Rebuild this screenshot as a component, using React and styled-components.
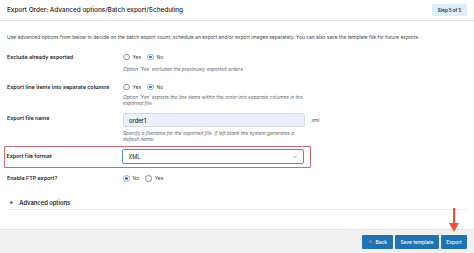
import React from 'react'
import styled, {createGlobalStyle} from 'styled-components'
import {ChevronLeft, ChevronDown} from 'lucide-react'

const GlobalStyle = createGlobalStyle`
    html, body {
        margin: 0;
        padding: 0;
        background: #fff;
    }
    body {
        font-family: Inter, "Liberation Sans", sans-serif;
        -webkit-font-smoothing: antialiased;
    }
`

const Page = styled.div`
    position: relative;
    width: 474px;
    height: 253px;
    overflow: hidden;
    display: flex;
    flex-direction: column;
    background: #fff;
    color: #1d2327;
`

const Header = styled.div`
    height: 21px;
    box-sizing: border-box;
    padding: 0 7px;
    display: flex;
    align-items: center;
    justify-content: space-between;
    border-bottom: 1px solid #e6e6e8;
`

const Title = styled.h2`
    margin: 0;
    font-size: 6.4px;
    font-weight: 500;
    color: #1d2327;
`

const StepBadge = styled.span`
    width: 35px;
    height: 12px;
    display: flex;
    align-items: center;
    justify-content: center;
    background: #dceef9;
    border-radius: 1px;
    font-size: 4.5px;
    font-weight: 700;
    color: #2c3e50;
`

const Body = styled.div`
    padding: 0 7px;
    display: flex;
    flex-direction: column;
`

const Intro = styled.p`
    margin: 12px 0 0;
    font-size: 4.9px;
    line-height: 8px;
    color: #3c434a;
    white-space: nowrap;
`

const Row = styled.div`
    display: grid;
    grid-template-columns: 116px 182px;
    margin-top: ${p => p.$gap}px;
    ${p => p.$highlight && `
        margin-left: -3px;
        width: 307px;
        box-sizing: border-box;
        border: 1.6px solid #c96b70;
        border-radius: 1px;
        padding: 2.4px 0 2.4px 1.4px;
    `}
`

const Label = styled.div`
    font-size: 5.4px;
    font-weight: 600;
    line-height: 8px;
    padding-top: ${p => p.$offset || 0}px;
    color: #1d2327;
    white-space: nowrap;
`

const Field = styled.div`
    display: flex;
    flex-direction: column;
`

const Help = styled.p`
    margin: ${p => p.$top}px 0 0;
    font-size: 4.8px;
    font-style: italic;
    line-height: 6px;
    color: #646970;
    white-space: nowrap;
`

const RadioRow = styled.div`
    display: flex;
    align-items: center;
    height: 8px;
    gap: 6px;
`

const RadioOption = styled.label`
    display: flex;
    align-items: center;
    gap: 3px;
    font-size: 5px;
    color: #3c434a;
`

const RadioDot = styled.span`
    width: 6.5px;
    height: 6.5px;
    box-sizing: border-box;
    border-radius: 50%;
    border: 0.8px solid ${p => p.$checked ? '#8fb4d8' : '#8c8f94'};
    background: #fff;
    display: flex;
    align-items: center;
    justify-content: center;
    &::after {
        content: '';
        width: 2.8px;
        height: 2.8px;
        border-radius: 50%;
        background: ${p => p.$checked ? '#2271b1' : 'transparent'};
    }
`

const InputLine = styled.div`
    display: flex;
    align-items: center;
    gap: 5px;
`

const TextInput = styled.div`
    width: 182px;
    height: 14px;
    box-sizing: border-box;
    flex-shrink: 0;
    background: #e8f0fe;
    border: 0.6px solid #d5dbe3;
    border-radius: 2px;
    padding-left: 5px;
    display: flex;
    align-items: center;
    font-size: 5.8px;
    font-weight: 500;
    color: #1d2327;
`

const Suffix = styled.span`
    font-size: 4.8px;
    color: #50575e;
`

const Select = styled.div`
    width: 182px;
    height: 15px;
    box-sizing: border-box;
    border: 1px solid #4a8fc7;
    border-radius: 2px;
    padding: 0 5px;
    display: flex;
    align-items: center;
    justify-content: space-between;
    font-size: 5.6px;
    color: #1d2327;
`

const Advanced = styled.div`
    margin-top: 16px;
    height: 9px;
    padding-bottom: 1.5px;
    border-bottom: 1px solid #ececec;
    display: flex;
    align-items: center;
    gap: 6px;
    padding-left: 3px;
    font-size: 5.8px;
    font-weight: 600;
    color: #1d2327;
`

const Caret = styled.span`
    font-size: 3.5px;
    color: #3c434a;
`

const Footer = styled.div`
    margin-top: auto;
    height: 24px;
    box-sizing: border-box;
    background: #f0f0f1;
    border-top: 1px solid #e4e4e4;
    display: flex;
    align-items: center;
    justify-content: flex-end;
    gap: 2px;
    padding: 0 7px;
`

const Button = styled.button`
    width: ${p => p.$w}px;
    height: 14px;
    padding: 0;
    border: none;
    border-radius: 1px;
    background: #2271b1;
    color: #fff;
    font-family: inherit;
    font-size: 4.9px;
    font-weight: 500;
    display: flex;
    align-items: center;
    justify-content: center;
    gap: 2.5px;
`

const Arrow = styled.svg`
    position: absolute;
    left: 449px;
    top: 208px;
`

const Radios = ({options, value}) => (
    <RadioRow>
        {options.map(opt => (
            <RadioOption key={opt}>
                <RadioDot $checked={opt === value} />
                {opt}
            </RadioOption>
        ))}
    </RadioRow>
)

function App() {
    return (
        <Page>
            <GlobalStyle />
            <Header>
                <Title>Export Order: Advanced options/Batch export/Scheduling</Title>
                <StepBadge>Step 5 of 5</StepBadge>
            </Header>
            <Body>
                <Intro>Use advanced options from below to decide on the batch export count, schedule an export and/or export images separately. You can also save the template file for future exports.</Intro>

                <Row $gap={12}>
                    <Label>Exclude already exported</Label>
                    <Field>
                        <Radios options={['Yes', 'No']} value="No" />
                        <Help $top={5}>Option 'Yes' excludes the previously exported orders.</Help>
                    </Field>
                </Row>

                <Row $gap={11}>
                    <Label>Export line items into separate columns</Label>
                    <Field>
                        <Radios options={['Yes', 'No']} value="No" />
                        <Help $top={3}>Option 'Yes' exports the line items within the order into separate columns in the<br />exported file.</Help>
                    </Field>
                </Row>

                <Row $gap={7}>
                    <Label $offset={1}>Export file name</Label>
                    <Field>
                        <InputLine>
                            <TextInput>order1</TextInput>
                            <Suffix>.xml</Suffix>
                        </InputLine>
                        <Help $top={3}>Specify a filename for the exported file. If left blank the system generates a<br />default name.</Help>
                    </Field>
                </Row>

                <Row $gap={4} $highlight>
                    <Label $offset={3}>Export file format</Label>
                    <Select>
                        XML
                        <ChevronDown size={6} strokeWidth={2} color="#50575e" />
                    </Select>
                </Row>

                <Row $gap={6.5}>
                    <Label>Enable FTP export?</Label>
                    <Radios options={['No', 'Yes']} value="No" />
                </Row>

                <Advanced>
                    <Caret>▶</Caret>
                    Advanced options
                </Advanced>
            </Body>
            <Footer>
                <Button $w={31}><ChevronLeft size={5} strokeWidth={3} />Back</Button>
                <Button $w={44}>Save template</Button>
                <Button $w={26}>Export</Button>
            </Footer>
            <Arrow width="10" height="25" viewBox="0 0 10 25">
                <rect x="4" y="0" width="2.2" height="17" fill="#e8533f" />
                <polygon points="0,15 10,15 5,24" fill="#e8533f" />
            </Arrow>
        </Page>
    )
}

export default App
